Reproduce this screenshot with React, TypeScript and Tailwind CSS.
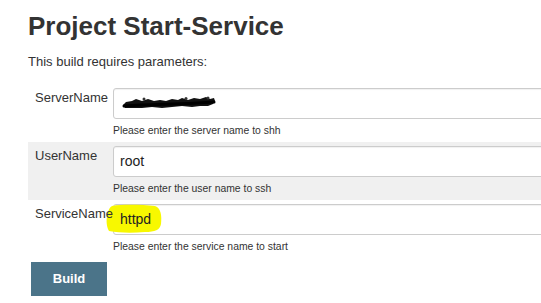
import React from "react";

function Row({
  label,
  hint,
  gray,
  children,
}: {
  label: string;
  hint: string;
  gray?: boolean;
  children?: React.ReactNode;
}) {
  return (
    <div className={`flex h-[58px] ${gray ? "bg-[#f0f0f0]" : ""}`}>
      <div className="relative z-20 w-[85px] shrink-0 whitespace-nowrap pl-[7px] pt-[6px] text-[13px] leading-[16px] text-[#333]">
        {label}
      </div>
      <div className="relative flex-1 pt-[4px]">
        <div className="relative h-[31px] w-[460px] rounded-[3px] border border-[#cccccc] bg-white shadow-[inset_0_1px_1px_rgba(0,0,0,0.06)]">
          {children}
        </div>
        <div className="pt-[5px] text-[10.4px] leading-[13px] text-[#333]">{hint}</div>
      </div>
    </div>
  );
}

export default function App() {
  return (
    <div className="relative h-[303px] w-[541px] overflow-hidden bg-white font-['Liberation_Sans',Arial,sans-serif] text-[#333]">
      <h1 className="ml-[28px] mt-[11px] text-[26px] font-bold leading-[30px] text-[#333]">
        Project Start-Service
      </h1>
      <p className="ml-[28px] mt-[13px] text-[13px] leading-[16px]">This build requires parameters:</p>
      <div className="ml-[28px] mt-[14px]">
        <Row label="ServerName" hint="Please enter the server name to shh">
          <svg className="absolute left-[8px] top-[7px]" width="94" height="14" viewBox="0 0 94 14">
            <path
              d="M1 9 L4 6 L10 5 L14 3 L20 5 L26 3 L32 5 L38 4 L44 5 L50 3 L56 4 L60 2 L66 4 L72 2 L78 3 L84 1 L88 3 L92 2 L93 5 L91 8 L86 10 L78 10 L70 11 L60 10 L50 11 L40 12 L30 11 L20 12 L10 12 L3 12 Z"
              fill="#111"
            />
            <path d="M2 10 C20 8 50 9 92 6" stroke="#000" strokeWidth="3" fill="none" strokeLinecap="round" />
            <circle cx="22" cy="3" r="1.5" fill="#333" />
            <circle cx="64" cy="2.5" r="1.5" fill="#333" />
            <circle cx="86" cy="2" r="1.5" fill="#333" />
          </svg>
        </Row>
        <Row label="UserName" hint="Please enter the user name to ssh" gray>
          <span className="absolute left-[6px] top-[6px] text-[14px] leading-[17px] text-[#222]">root</span>
        </Row>
        <div className="relative">
          <Row label="ServiceName" hint="Please enter the service name to start" />
          <svg className="pointer-events-none absolute left-[77px] top-[4px] z-10" width="58" height="30" viewBox="0 0 58 30">
            <path
              d="M7 2 C20 0 38 1 50 2 C56 4 57 12 56 20 C55 26 50 28 40 28 C28 29 14 29 4 27 C1 22 1 14 3 8 C4 5 5 3 7 2 Z"
              fill="#f8f800"
            />
          </svg>
          <span className="pointer-events-none absolute left-[92px] top-[11px] z-10 text-[14px] leading-[17px] text-[#222]">httpd</span>
        </div>
      </div>
      <button className="ml-[31px] mt-[4px] flex h-[34px] w-[76px] items-center justify-center bg-[#4b7489] text-[13px] font-bold text-white">
        Build
      </button>
    </div>
  );
}
